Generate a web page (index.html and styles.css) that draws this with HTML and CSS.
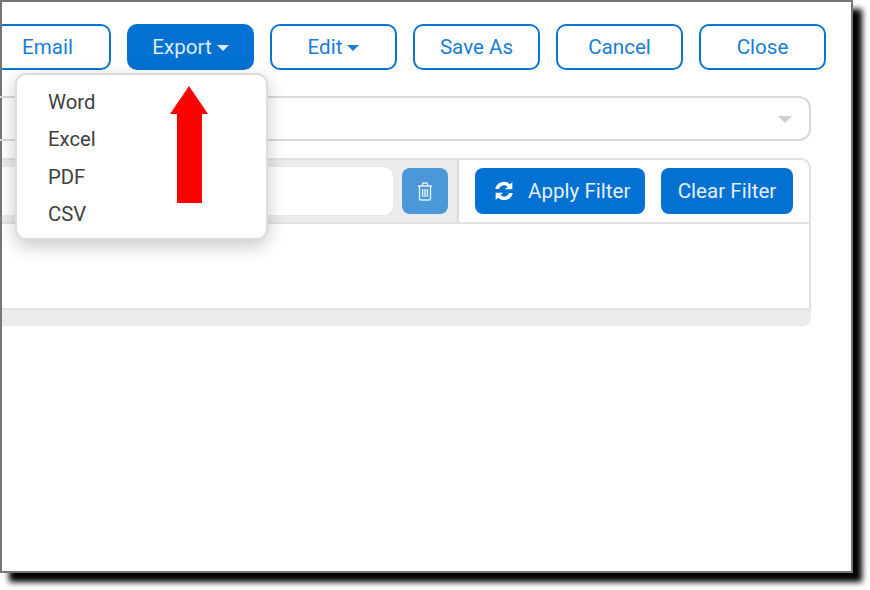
FILE: index.html
```html
<!DOCTYPE html>
<html lang="en">
<head>
<meta charset="utf-8">
<title>Export menu</title>
<link rel="stylesheet" href="styles.css">
</head>
<body>
<div class="window">
  <div class="toolbar">
    <button class="btn">Email</button>
    <button class="btn btn-solid">Export<span class="caret"></span></button>
    <button class="btn">Edit<span class="caret"></span></button>
    <button class="btn">Save As</button>
    <button class="btn">Cancel</button>
    <button class="btn">Close</button>
  </div>
  <div class="select"><span class="select-caret"></span></div>
  <div class="panel">
    <div class="filter">
      <div class="filter-left">
        <div class="input"></div>
        <button class="trash" aria-label="Delete">
          <svg width="16" height="19" viewBox="0 0 16 19" fill="none" stroke="#fff" stroke-opacity=".85" stroke-width="1.4">
            <path d="M1 4h14M5.5 4V2.2Q5.5 1 6.7 1h2.6q1.2 0 1.2 1.200V4"/>
            <path d="M2.500 4v12.500Q2.500 18 4 18h8q1.500 0 1.500-1.500V4"/>
            <path d="M5.600 7v8M8 7v8M10.400 7v8"/>
          </svg>
        </button>
      </div>
      <div class="filter-right">
        <button class="action apply">
          <svg width="20" height="20" viewBox="0 0 18 18" fill="#fff">
            <path d="M16.500.800v6.600H9.900l2.300-2.300A4.900 4.900 0 0 0 4.300 7.100H1.100A8 8 0 0 1 14.400 2.900z"/>
            <path d="M1.500 17.200v-6.600h6.600l-2.300 2.300a4.900 4.900 0 0 0 7.900-2h3.200A8 8 0 0 1 3.600 15.100z"/>
          </svg>
          <span>Apply Filter</span>
        </button>
        <button class="action">Clear Filter</button>
      </div>
    </div>
    <div class="panel-body"></div>
    <div class="scrollbar"></div>
  </div>
  <ul class="menu">
    <li>Word</li>
    <li>Excel</li>
    <li>PDF</li>
    <li>CSV</li>
  </ul>
  <svg class="arrow" width="38" height="117" viewBox="0 0 38 117">
    <path d="M19 0L38 28H32V117H7V28H0z" fill="#fe0000"/>
  </svg>
</div>
</body>
</html>
```

FILE: styles.css
```css
* { box-sizing: border-box; }
html, body { margin: 0; padding: 0; background: #fff; overflow: hidden; }
body { width: 870px; height: 590px; font-family: Roboto, "Liberation Sans", sans-serif; }
button { font-family: inherit; cursor: pointer; }

.window {
  position: relative;
  width: 853px;
  height: 573px;
  border: 2px solid #767676;
  background: #fff;
  box-shadow: 9px 9px 6px #000;
  overflow: visible;
}

.toolbar {
  display: flex;
  justify-content: flex-end;
  gap: 16px;
  height: 46px;
  margin-top: 22px;
  padding-right: 25px;
  overflow: hidden;
}
.btn {
  flex: none;
  width: 127px;
  height: 46px;
  padding: 0;
  border: 2px solid #0a74d2;
  border-radius: 10px;
  background: #fff;
  color: #1a7dd6;
  font-size: 20.600px;
}
.btn-solid { background: #0271d1; border-color: #0271d1; color: #dcebf9; }
.caret {
  display: inline-block;
  margin-left: 5px;
  vertical-align: 3px;
  border-left: 6px solid transparent;
  border-right: 6px solid transparent;
  border-top: 6px solid currentColor;
}

.select {
  display: flex;
  align-items: center;
  justify-content: flex-end;
  height: 45px;
  margin: 26px 40px 0 -2px;
  padding-right: 17px;
  border: 2px solid #d9d9d9;
  border-left: 0;
  border-radius: 0 12px 12px 0;
}
.select-caret {
  margin-top: 2px;
  border-left: 7px solid transparent;
  border-right: 7px solid transparent;
  border-top: 7px solid #cfcfcf;
}

.panel {
  margin: 17px 40px 0 0;
}
.filter {
  display: flex;
  height: 66px;
  border: 2px solid #e2e2e2;
  border-left: 0;
  border-radius: 0 10px 0 0;
}
.filter-left {
  display: flex;
  align-items: center;
  gap: 9px;
  width: 457px;
  padding-right: 9px;
  background: #ebebeb;
  border-right: 2px solid #dcdcdc;
}
.input {
  flex: 1;
  height: 48px;
  background: #fff;
  border-radius: 0 10px 10px 0;
}
.trash {
  display: flex;
  align-items: center;
  justify-content: center;
  flex: none;
  width: 46px;
  height: 46px;
  padding: 0;
  border: 0;
  border-radius: 8px;
  background: #4a97da;
}
.filter-right {
  display: flex;
  align-items: center;
  gap: 16px;
  padding-left: 16px;
}
.action {
  display: flex;
  align-items: center;
  justify-content: center;
  height: 46px;
  width: 132px;
  padding: 0;
  border: 0;
  border-radius: 8px;
  background: #0271d1;
  color: #e3effa;
  font-size: 20.600px;
}
.apply { width: 170px; gap: 14px; justify-content: flex-start; padding-left: 19px; }

.panel-body {
  height: 86px;
  border-right: 2px solid #e2e2e2;
  border-bottom: 2px solid #e2e2e2;
}
.scrollbar {
  height: 16px;
  background: #ebebeb;
  border-radius: 0 0 8px 0;
}

.menu {
  position: absolute;
  left: 13px;
  top: 71px;
  width: 253px;
  height: 167px;
  margin: 0;
  padding: 9px 0 0 31px;
  list-style: none;
  background: #fff;
  border: 2px solid #dcdcdc;
  border-radius: 11px;
  box-shadow: 0 6px 18px rgba(0, 0, 0, .22);
  color: #404040;
  font-size: 20.300px;
}
.menu li { height: 37.400px; line-height: 37.400px; }

.arrow {
  position: absolute;
  left: 168px;
  top: 84px;
}
```
